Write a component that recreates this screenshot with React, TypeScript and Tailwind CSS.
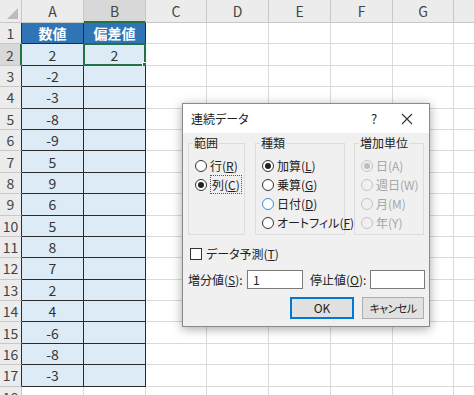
import React from 'react';

const COLS = [
  { name: 'A', w: 'w-[62px]' },
  { name: 'B', w: 'w-[62px]' },
  { name: 'C', w: 'w-[61px]' },
  { name: 'D', w: 'w-[62px]' },
  { name: 'E', w: 'w-[62px]' },
  { name: 'F', w: 'w-[62px]' },
  { name: 'G', w: 'w-[61px]' },
  { name: '', w: 'w-[62px]' },
];

const VALUES = [2, -2, -3, -8, -9, 5, 9, 6, 5, 8, 7, 2, 4, -6, -8, -3];

function Radio({ checked, disabled, hover }: { checked?: boolean; disabled?: boolean; hover?: boolean }) {
  const ring = disabled ? 'border-[#c4c4c4] bg-[#f0f0f0]' : hover ? 'border-[#3c8ed8] bg-white' : 'border-[#333] bg-white';
  return (
    <span className={`flex h-[12px] w-[12px] shrink-0 items-center justify-center rounded-full border ${ring}`}>
      {checked && <span className={`h-[6px] w-[6px] rounded-full ${disabled ? 'bg-[#bdbdbd]' : 'bg-[#222]'}`} />}
    </span>
  );
}

function Option({
  children,
  checked,
  disabled,
  hover,
}: {
  children: React.ReactNode;
  checked?: boolean;
  disabled?: boolean;
  hover?: boolean;
}) {
  return (
    <div className={`flex h-[19px] items-center gap-[3px] ${disabled ? 'text-[#a6a6a6]' : 'text-[#222]'}`}>
      <Radio checked={checked} disabled={disabled} hover={hover} />
      <span className="whitespace-nowrap">{children}</span>
    </div>
  );
}

function Group({ label, w, children }: { label: string; w: string; children: React.ReactNode }) {
  return (
    <div className={`relative h-[92px] ${w} border border-[#dcdcdc]`}>
      <span className="absolute -top-[9px] left-[4px] bg-[#f0f0f0] px-px text-[12px] leading-[16px] text-[#222]">{label}</span>
      <div className="flex flex-col pl-[6px] pt-[12px]">{children}</div>
    </div>
  );
}

function Dialog() {
  return (
    <div className="absolute left-[182px] top-[103px] flex h-[224px] w-[248px] flex-col border border-[#8a8a8a] bg-[#f0f0f0] text-[12px] leading-[16px] shadow-[0_2px_10px_rgba(0,0,0,0.35)]">
      {/* title bar */}
      <div className="flex h-[29px] items-center bg-white pl-[8px] text-[#222]">
        <span className="flex-1">連続データ</span>
        <span className="w-[22px] text-[13px]">?</span>
        <span className="flex w-[36px] justify-center pr-[8px]">
          <svg width="12" height="12" viewBox="0 0 12 12">
            <path d="M1 1L11 11M11 1L1 11" stroke="#333" strokeWidth="1.1" />
          </svg>
        </span>
      </div>

      {/* groups */}
      <div className="mt-[10px] flex pl-[5px]">
        <Group label="範囲" w="w-[57px]">
          <Option>
            行(<u>R</u>)
          </Option>
          <Option checked>
            <span className="border border-dotted border-[#555] px-px">
              列(<u>C</u>)
            </span>
          </Option>
        </Group>
        <div className="w-[10px]" />
        <Group label="種類" w="w-[90px]">
          <Option checked>
            加算(<u>L</u>)
          </Option>
          <Option>
            乗算(<u>G</u>)
          </Option>
          <Option hover>
            日付(<u>D</u>)
          </Option>
          <Option>
            オートフィル(<u>F</u>)
          </Option>
        </Group>
        <div className="w-[9px]" />
        <Group label="増加単位" w="w-[70px]">
          <Option checked disabled>
            日(A)
          </Option>
          <Option disabled>週日(W)</Option>
          <Option disabled>月(M)</Option>
          <Option disabled>年(Y)</Option>
        </Group>
      </div>

      {/* checkbox */}
      <div className="mt-[11px] flex h-[16px] items-center gap-[4px] pl-[7px] text-[#222]">
        <span className="h-[12px] w-[12px] border border-[#333] bg-white" />
        <span>
          データ予測(<u>T</u>)
        </span>
      </div>

      {/* inputs */}
      <div className="mt-[8px] flex h-[19px] items-center pl-[5px] text-[#222]">
        <span className="w-[59px] whitespace-nowrap">
          増分値(<u>S</u>):
        </span>
        <span className="flex h-[19px] w-[56px] items-center border border-[#7a7a7a] bg-white pl-[5px]">1</span>
        <span className="ml-[7px] w-[60px] whitespace-nowrap">
          停止値(<u>O</u>):
        </span>
        <span className="h-[19px] w-[55px] border border-[#7a7a7a] bg-white" />
      </div>

      {/* buttons */}
      <div className="mt-[8px] flex justify-end gap-[8px] pr-[5px]">
        <button className="h-[22px] w-[64px] border-2 border-[#0078d7] bg-[#e1e1e1] text-[12px] text-[#222]">OK</button>
        <button className="h-[22px] w-[62px] border border-[#adadad] bg-[#e1e1e1] text-[11px] tracking-[-0.6px] text-[#222] [font-feature-settings:'palt']">
          キャンセル
        </button>
      </div>
    </div>
  );
}

export default function App() {
  const rows = Array.from({ length: 18 }, (_, i) => i + 1);
  return (
    <div className="relative h-[395px] w-[474px] overflow-hidden bg-white font-['Noto_Sans_CJK_JP','Liberation_Sans',sans-serif] [font-feature-settings:'palt']">
      {/* column header */}
      <div className="flex h-[23px]">
        <div className="relative h-full w-[22px] shrink-0 border-b border-r border-[#c8c8c8] bg-[#ececec]">
          <svg className="absolute bottom-[3px] right-[3px]" width="11" height="11" viewBox="0 0 11 11">
            <path d="M11 0L11 11L0 11Z" fill="#bcbcbc" />
          </svg>
        </div>
        {COLS.map((c, ci) => {
          const sel = c.name === 'B';
          return (
            <div
              key={ci}
              className={`flex h-full ${c.w} shrink-0 items-center justify-center border-r text-[14px] leading-none ${
                sel
                  ? 'border-b-2 border-b-[#217346] border-r-[#c8c8c8] bg-[#d8d8d8] text-[#444]'
                  : 'border-b border-[#c8c8c8] bg-[#ececec] text-[#444]'
              }`}
            >
              {c.name}
            </div>
          );
        })}
      </div>

      {rows.map((r) => {
        const inTable = r <= 17;
        return (
          <div key={r} className="flex h-[21.4px]">
            <div
              className={`flex h-full w-[22px] shrink-0 items-center justify-center border-b border-r text-[14px] leading-none ${
                r === 2
                  ? 'border-b-[#c8c8c8] border-r-2 border-r-[#217346] bg-[#d8d8d8] text-[#444]'
                  : `border-b-[#c8c8c8] ${inTable ? 'border-r-[#2b2b2b]' : 'border-r-[#c8c8c8]'} bg-[#ececec] text-[#444]`
              }`}
            >
              {r}
            </div>
            {COLS.map((c, ci) => {
              const table = inTable && ci < 2;
              let content: React.ReactNode = null;
              let cls = 'border-b border-r border-[#dadada] bg-white';
              if (table) {
                if (r === 1) {
                  cls = 'border-b border-r border-[#2b2b2b] bg-[#2f75b5] text-white font-bold';
                  content = ci === 0 ? '数値' : '偏差値';
                } else {
                  cls = 'border-b border-r border-[#2b2b2b] bg-[#ddebf7] text-[#333]';
                  if (ci === 0) content = VALUES[r - 2];
                  if (ci === 1 && r === 2) content = 2;
                }
              }
              const selected = r === 2 && ci === 1;
              return (
                <div
                  key={ci}
                  className={`relative flex h-full ${c.w} shrink-0 items-center justify-center text-[14px] leading-none ${cls}`}
                >
                  {content}
                  {selected && (
                    <>
                      <span className="absolute -left-px -top-px bottom-[-1px] right-[-1px] border-2 border-[#217346]" />
                      <span className="absolute bottom-[-3px] right-[-3px] h-[6px] w-[6px] border border-white bg-[#217346]" />
                    </>
                  )}
                </div>
              );
            })}
          </div>
        );
      })}

      <Dialog />
    </div>
  );
}
